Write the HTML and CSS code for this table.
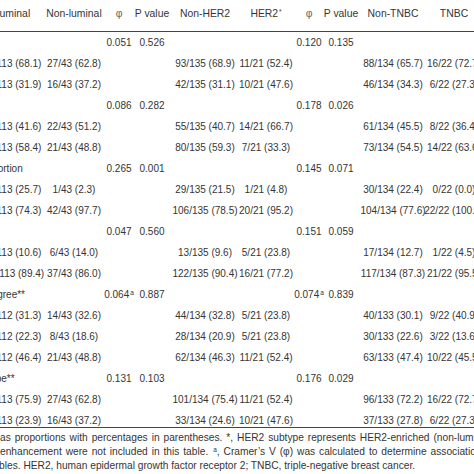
FILE: index.html
```html
<!DOCTYPE html>
<html lang="en">
<head>
<meta charset="utf-8">
<title>Table</title>
<link rel="stylesheet" href="styles.css">
</head>
<body>
<div class="page">
  <div class="table">
    <div class="row head">
      <span class="lab">Features</span><span>Luminal</span><span>Non-luminal</span><span class="phi">φ</span><span>P value</span><span>Non-HER2</span><span><i>HER2<sup>*</sup></i></span><span class="phi">φ</span><span>P value</span><span>Non-TNBC</span><span>TNBC</span>
    </div>
    <div class="rule"></div>
    <div class="row"><span class="lab">Shape</span><span></span><span></span><span>0.051</span><span>0.526</span><span></span><span></span><span>0.120</span><span>0.135</span><span></span><span></span></div>
    <div class="row"><span></span><span>77/113 (68.1)</span><span>27/43 (62.8)</span><span></span><span></span><span>93/135 (68.9)</span><span>11/21 (52.4)</span><span></span><span></span><span>88/134 (65.7)</span><span>16/22 (72.7)</span></div>
    <div class="row"><span></span><span>36/113 (31.9)</span><span>16/43 (37.2)</span><span></span><span></span><span>42/135 (31.1)</span><span>10/21 (47.6)</span><span></span><span></span><span>46/134 (34.3)</span><span>6/22 (27.3)</span></div>
    <div class="row"><span class="lab">Margin</span><span></span><span></span><span>0.086</span><span>0.282</span><span></span><span></span><span>0.178</span><span>0.026</span><span></span><span></span></div>
    <div class="row"><span></span><span>47/113 (41.6)</span><span>22/43 (51.2)</span><span></span><span></span><span>55/135 (40.7)</span><span>14/21 (66.7)</span><span></span><span></span><span>61/134 (45.5)</span><span>8/22 (36.4)</span></div>
    <div class="row"><span></span><span>66/113 (58.4)</span><span>21/43 (48.8)</span><span></span><span></span><span>80/135 (59.3)</span><span>7/21 (33.3)</span><span></span><span></span><span>73/134 (54.5)</span><span>14/22 (63.6)</span></div>
    <div class="row"><span class="lab">Intratumoral necrosis portion</span><span></span><span></span><span>0.265</span><span>0.001</span><span></span><span></span><span>0.145</span><span>0.071</span><span></span><span></span></div>
    <div class="row"><span></span><span>29/113 (25.7)</span><span>1/43 (2.3)</span><span></span><span></span><span>29/135 (21.5)</span><span>1/21 (4.8)</span><span></span><span></span><span>30/134 (22.4)</span><span>0/22 (0.0)</span></div>
    <div class="row"><span></span><span>84/113 (74.3)</span><span>42/43 (97.7)</span><span></span><span></span><span>106/135 (78.5)</span><span>20/21 (95.2)</span><span></span><span></span><span>104/134 (77.6)</span><span>22/22 (100.0)</span></div>
    <div class="row"><span class="lab">Rim enhancement</span><span></span><span></span><span>0.047</span><span>0.560</span><span></span><span></span><span>0.151</span><span>0.059</span><span></span><span></span></div>
    <div class="row"><span></span><span>12/113 (10.6)</span><span>6/43 (14.0)</span><span></span><span></span><span>13/135 (9.6)</span><span>5/21 (23.8)</span><span></span><span></span><span>17/134 (12.7)</span><span>1/22 (4.5)</span></div>
    <div class="row"><span></span><span>101/113 (89.4)</span><span>37/43 (86.0)</span><span></span><span></span><span>122/135 (90.4)</span><span>16/21 (77.2)</span><span></span><span></span><span>117/134 (87.3)</span><span>21/22 (95.5)</span></div>
    <div class="row"><span class="lab">Mass enhancement degree**</span><span></span><span></span><span><i>0.064<sup>a</sup></i></span><span>0.887</span><span></span><span></span><span><i>0.074<sup>a</sup></i></span><span>0.839</span><span></span><span></span></div>
    <div class="row"><span></span><span>35/112 (31.3)</span><span>14/43 (32.6)</span><span></span><span></span><span>44/134 (32.8)</span><span>5/21 (23.8)</span><span></span><span></span><span>40/133 (30.1)</span><span>9/22 (40.9)</span></div>
    <div class="row"><span></span><span>25/112 (22.3)</span><span>8/43 (18.6)</span><span></span><span></span><span>28/134 (20.9)</span><span>5/21 (23.8)</span><span></span><span></span><span>30/133 (22.6)</span><span>3/22 (13.6)</span></div>
    <div class="row"><span></span><span>52/112 (46.4)</span><span>21/43 (48.8)</span><span></span><span></span><span>62/134 (46.3)</span><span>11/21 (52.4)</span><span></span><span></span><span>63/133 (47.4)</span><span>10/22 (45.5)</span></div>
    <div class="row"><span class="lab">Time-intensity curve type**</span><span></span><span></span><span>0.131</span><span>0.103</span><span></span><span></span><span>0.176</span><span>0.029</span><span></span><span></span></div>
    <div class="row"><span></span><span>86/113 (75.9)</span><span>27/43 (62.8)</span><span></span><span></span><span>101/134 (75.4)</span><span>11/21 (52.4)</span><span></span><span></span><span>96/133 (72.2)</span><span>16/22 (72.7)</span></div>
    <div class="row last"><span></span><span>27/113 (23.9)</span><span>16/43 (37.2)</span><span></span><span></span><span>33/134 (24.6)</span><span>10/21 (47.6)</span><span></span><span></span><span>37/133 (27.8)</span><span>6/22 (27.3)</span></div>
    <div class="rule"></div>
  </div>
  <div class="notes">
    <div class="note wide">as proportions with percentages in parentheses. *, HER2 subtype represents HER2-enriched (non-luminal) tumors.</div>
    <div class="note wide">enhancement were not included in this table. <sup>a</sup>, Cramer’s V (φ) was calculated to determine associations</div>
    <div class="note tail">variables. HER2, human epidermal growth factor receptor 2; TNBC, triple-negative breast cancer.</div>
  </div>
</div>
</body>
</html>
```

FILE: styles.css
```css
html, body {
  margin: 0;
  padding: 0;
  background: #ffffff;
}

body {
  width: 474px;
  height: 474px;
  overflow: hidden;
  font-family: "Liberation Sans", Arial, sans-serif;
  font-size: 10px;
  color: #353535;
}

.page {
  width: 474px;
  height: 474px;
  overflow: hidden;
}

.table {
  margin-left: -104px;
  width: 582px;
}

.row {
  display: grid;
  grid-template-columns: 84px 64px 60px 30px 36px 70px 52px 34px 30px 74px 48px;
  height: 21px;
  line-height: 21px;
}

.row > span {
  display: flex;
  justify-content: center;
  white-space: nowrap;
}

.row > span.lab {
  justify-content: flex-start;
}

.row i {
  font-style: normal;
}

.head {
  height: 31px;
  line-height: 28px;
  font-size: 10.4px;
}

.row.last {
  height: 17px;
}

.phi {
  color: #666666;
}

sup {
  font-size: 6.5px;
  line-height: 0;
  vertical-align: 3px;
  margin-left: 1px;
}

.rule {
  height: 1px;
  background: #444444;
}

.notes {
  margin-top: 3px;
  line-height: 14px;
  font-size: 10.2px;
}

.note {
  white-space: nowrap;
}

.note.wide {
  word-spacing: 1.1px;
}

.note.tail {
  margin-left: -23px;
}
```
